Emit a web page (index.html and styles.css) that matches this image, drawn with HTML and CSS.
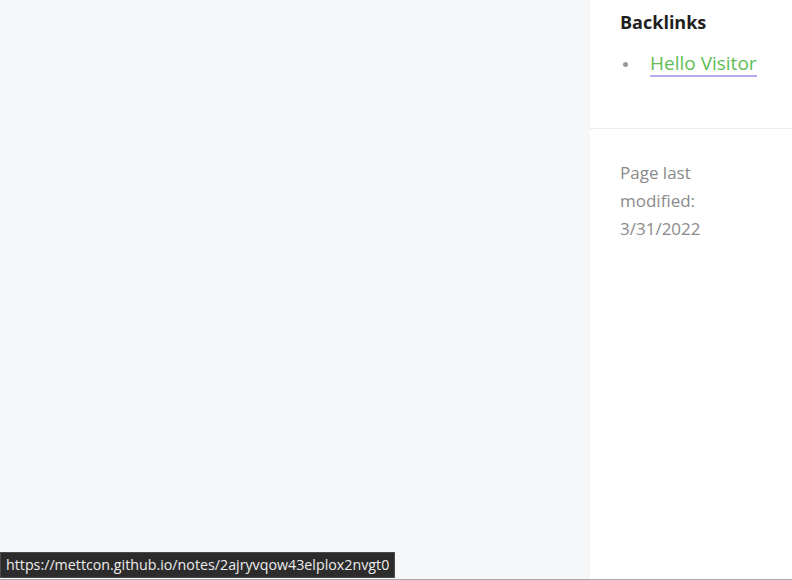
FILE: index.html
```html
<!DOCTYPE html>
<html>
<head>
<meta charset="utf-8">
<link rel="stylesheet" href="styles.css">
</head>
<body>
<div class="layout">
  <main class="main"></main>
  <aside class="side">
    <section class="backlinks">
      <h3 class="title">Backlinks</h3>
      <ul class="list">
        <li class="item"><a class="link" href="#">Hello Visitor</a></li>
      </ul>
    </section>
    <section class="meta">
      <p class="modified">Page last modified: 3/31/2022</p>
    </section>
  </aside>
</div>
<div class="status">https://mettcon.github.io/notes/2ajryvqow43elplox2nvgt0</div>
</body>
</html>
```
FILE: styles.css
```css
html, body {
  margin: 0;
  padding: 0;
  height: 100%;
}
body {
  font-family: "Open Sans", "Noto Sans", sans-serif;
  background: #ffffff;
  border-bottom: 1px solid #a8a8a8;
  box-sizing: border-box;
  overflow: hidden;
}
.layout {
  display: flex;
  height: 579px;
}
.main {
  flex: 0 0 590px;
  background: #f6f7f9;
}
.side {
  flex: 1;
  background: #ffffff;
}
.backlinks {
  padding: 10px 20px 0 30px;
  height: 118px;
  border-bottom: 1px solid #ececec;
}
.title {
  margin: 0;
  font-size: 18px;
  font-weight: 700;
  color: #1f1f1f;
  line-height: 24px;
}
.list {
  margin: 17px 0 0 0;
  padding: 0;
  list-style: none;
}
.item {
  display: flex;
  align-items: center;
  line-height: 26px;
}
.item::before {
  content: "";
  width: 5px;
  height: 5px;
  border-radius: 50%;
  background: #9a9a9a;
  margin: 0 22px 0 3px;
}
.link {
  color: #5fbd55;
  font-size: 19px;
  text-decoration: none;
  border-bottom: 2px solid #b7a9f0;
  line-height: 24px;
}
.meta {
  padding: 30px 20px 0 30px;
}
.modified {
  margin: 0;
  width: 100px;
  font-size: 17px;
  line-height: 28px;
  color: #8a8a8a;
}
.status {
  position: fixed;
  left: 0;
  bottom: 2px;
  height: 24px;
  padding: 0 5px;
  background: #2c2c2c;
  border: 1px solid #4a4a4a;
  color: #ececec;
  font-size: 14.25px;
  line-height: 24px;
}
```
